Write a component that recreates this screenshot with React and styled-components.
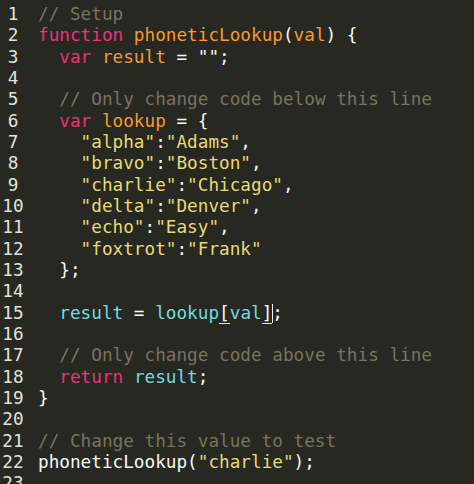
import React from "react";
import styled, { createGlobalStyle } from "styled-components";

const GlobalStyle = createGlobalStyle`
  html, body {
    margin: 0;
    padding: 0;
    background: #272822;
    overflow: hidden;
  }
`;

const colors = {
  plain: "#f8f8f2",
  keyword: "#f0307a",
  name: "#f69b2c",
  comment: "#77735f",
  string: "#e6db74",
  ident: "#72dbe0",
};

const Editor = styled.div`
  width: 474px;
  height: 484px;
  box-sizing: border-box;
  padding-top: 4px;
  background: #272822;
  font-family: "DejaVu Sans Mono", "Liberation Mono", monospace;
  font-size: 17.7px;
  letter-spacing: 0;
  overflow: hidden;
`;

const Line = styled.div`
  display: flex;
  align-items: baseline;
  height: 21.33px;
  line-height: 21.33px;
`;

const Gutter = styled.span`
  flex: none;
  width: 26px;
  text-align: center;
  color: #e2e2dc;
  margin-right: 12px;
`;

const Code = styled.span`
  white-space: pre;
  color: ${colors.plain};
`;

const Tok = styled.span`
  color: ${(p) => colors[p.$k] || colors.plain};
`;

const Bracket = styled.span`
  color: ${colors.plain};
  border-bottom: 1px solid #e8e8e0;
`;

const Cursor = styled.span`
  display: inline-block;
  width: 1px;
  height: 19px;
  margin: 0 -1px 0 0;
  background: #f0f0f0;
  vertical-align: -4px;
`;

const t = (k, s) => ({ k, s });

const lines = [
  [t("comment", "// Setup")],
  [t("keyword", "function"), t(null, " "), t("name", "phoneticLookup"), t(null, "("), t("name", "val"), t(null, ") {")],
  [t(null, "  "), t("keyword", "var"), t(null, " "), t("name", "result"), t(null, ' = "";')],
  [],
  [t(null, "  "), t("comment", "// Only change code below this line")],
  [t(null, "  "), t("keyword", "var"), t(null, " "), t("name", "lookup"), t(null, " = {")],
  [t(null, "    "), t("string", '"alpha"'), t(null, ":"), t("string", '"Adams"'), t(null, ",")],
  [t(null, "    "), t("string", '"bravo"'), t(null, ":"), t("string", '"Boston"'), t(null, ",")],
  [t(null, "    "), t("string", '"charlie"'), t(null, ":"), t("string", '"Chicago"'), t(null, ",")],
  [t(null, "    "), t("string", '"delta"'), t(null, ":"), t("string", '"Denver"'), t(null, ",")],
  [t(null, "    "), t("string", '"echo"'), t(null, ":"), t("string", '"Easy"'), t(null, ",")],
  [t(null, "    "), t("string", '"foxtrot"'), t(null, ":"), t("string", '"Frank"')],
  [t(null, "  };")],
  [],
  "lookupLine",
  [],
  [t(null, "  "), t("comment", "// Only change code above this line")],
  [t(null, "  "), t("keyword", "return"), t(null, " "), t("ident", "result"), t(null, ";")],
  [t(null, "}")],
  [],
  [t("comment", "// Change this value to test")],
  [t(null, "phoneticLookup("), t("string", '"charlie"'), t(null, ");")],
  [],
];

const LookupLine = () => (
  <Code>
    {"  "}
    <Tok $k="ident">result</Tok>
    {" = "}
    <Tok $k="ident">lookup</Tok>
    <Bracket>[</Bracket>
    <Tok $k="ident">val</Tok>
    <Bracket>]</Bracket>
    <Cursor />
    {";"}
  </Code>
);

export default function App() {
  return (
    <>
      <GlobalStyle />
      <Editor>
        {lines.map((line, i) => (
          <Line key={i}>
            <Gutter>{i + 1}</Gutter>
            {line === "lookupLine" ? (
              <LookupLine />
            ) : (
              <Code>
                {line.map((tok, j) => (
                  <Tok key={j} $k={tok.k}>
                    {tok.s}
                  </Tok>
                ))}
              </Code>
            )}
          </Line>
        ))}
      </Editor>
    </>
  );
}
